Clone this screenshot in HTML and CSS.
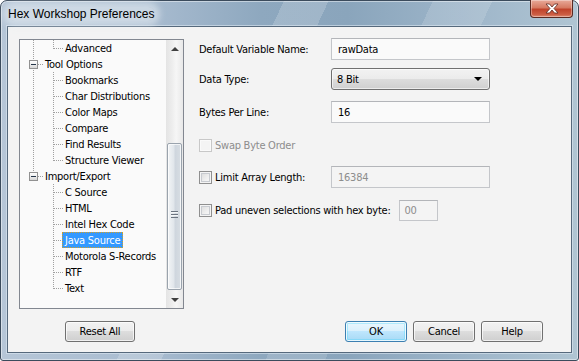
FILE: index.html
```html
<!DOCTYPE html>
<html>
<head>
<meta charset="utf-8">
<link rel="stylesheet" href="styles.css">
</head>
<body>
<div class="window">
  <div class="titlebar">
    <span class="title">Hex Workshop Preferences</span>
    <div class="close">
      <svg width="16" height="11" viewBox="0 0 16 11"><path d="M2 1h3.5l2.5 3 2.5-3H14l-4 4.5 4 4.5h-3.5L8 7 5.5 10H2l4-4.5z" fill="#fff" stroke="#5b2a22" stroke-width="0.8" stroke-linejoin="round"/></svg>
    </div>
  </div>
  <div class="client">
    <div class="main">
      <div class="tree">
        <ul class="tree-list">
          <li class="row"><span class="c v"></span><span class="c corner"></span><span class="lbl">Advanced</span></li>
          <li class="row root"><span class="c boxcell full"><span class="ebox"></span></span><span class="lbl">Tool Options</span></li>
          <li class="row"><span class="c v"></span><span class="c tee"></span><span class="lbl">Bookmarks</span></li>
          <li class="row"><span class="c v"></span><span class="c tee"></span><span class="lbl">Char Distributions</span></li>
          <li class="row"><span class="c v"></span><span class="c tee"></span><span class="lbl">Color Maps</span></li>
          <li class="row"><span class="c v"></span><span class="c tee"></span><span class="lbl">Compare</span></li>
          <li class="row"><span class="c v"></span><span class="c tee"></span><span class="lbl">Find Results</span></li>
          <li class="row"><span class="c v"></span><span class="c corner"></span><span class="lbl">Structure Viewer</span></li>
          <li class="row root"><span class="c boxcell last"><span class="ebox"></span></span><span class="lbl">Import/Export</span></li>
          <li class="row"><span class="c"></span><span class="c tee"></span><span class="lbl">C Source</span></li>
          <li class="row"><span class="c"></span><span class="c tee"></span><span class="lbl">HTML</span></li>
          <li class="row"><span class="c"></span><span class="c tee"></span><span class="lbl">Intel Hex Code</span></li>
          <li class="row"><span class="c"></span><span class="c tee"></span><span class="lbl sel">Java Source</span></li>
          <li class="row"><span class="c"></span><span class="c tee"></span><span class="lbl">Motorola S-Records</span></li>
          <li class="row"><span class="c"></span><span class="c tee"></span><span class="lbl">RTF</span></li>
          <li class="row"><span class="c"></span><span class="c corner"></span><span class="lbl">Text</span></li>
        </ul>
        <div class="scrollbar">
          <div class="sb-btn"><span class="arr-up"></span></div>
          <div class="sb-track">
            <div class="thumb"><span class="grip"></span></div>
          </div>
          <div class="sb-btn"><span class="arr-down"></span></div>
        </div>
      </div>

      <div class="form">
        <div class="frow r1">
          <span class="flabel">Default Variable Name:</span>
          <span class="field">rawData</span>
        </div>
        <div class="frow r2">
          <span class="flabel">Data Type:</span>
          <span class="select"><span>8 Bit</span><span class="sel-arrow"></span></span>
        </div>
        <div class="frow r3">
          <span class="flabel">Bytes Per Line:</span>
          <span class="field">16</span>
        </div>
        <div class="frow r4">
          <span class="chk disabled"></span>
          <span class="clabel dis">Swap Byte Order</span>
        </div>
        <div class="frow r5">
          <span class="chkwrap"><span class="chk"></span><span class="clabel">Limit Array Length:</span></span>
          <span class="field dis">16384</span>
        </div>
        <div class="frow r6">
          <span class="chk"></span>
          <span class="clabel">Pad uneven selections with hex byte:</span>
          <span class="field small dis">00</span>
        </div>
      </div>
    </div>

    <div class="buttons">
      <span class="btn reset">Reset All</span>
      <span class="btn def">OK</span>
      <span class="btn">Cancel</span>
      <span class="btn">Help</span>
    </div>
  </div>
</div>
</body>
</html>
```

FILE: styles.css
```css
* { box-sizing: border-box; }
html, body { margin: 0; padding: 0; }
body {
  width: 579px;
  height: 361px;
  background: #ffffff;
  font-family: "DejaVu Sans Condensed", "Liberation Sans", sans-serif;
  font-stretch: condensed;
  font-size: 11px;
  letter-spacing: -0.25px;
  color: #000;
  overflow: hidden;
}

.window {
  width: 579px;
  height: 361px;
  border: 1px solid #3b4b5c;
  border-radius: 7px 7px 3px 3px;
  background:
    linear-gradient(115deg, transparent 0 38%, rgba(255,255,255,0.18) 38% 44%, transparent 44% 58%, rgba(255,255,255,0.14) 58% 66%, transparent 66%),
    linear-gradient(90deg, #b6c6d7 0%, #a9bcd0 25%, #8ea8bf 45%, #8aa5bc 60%, #9db5c9 80%, #b0c5d3 100%);
  padding: 25px 6px 7px 6px;
  display: flex;
  flex-direction: column;
  box-shadow: inset 0 0 0 1px rgba(255,255,255,0.45);
}

.titlebar {
  height: 0;
  position: relative;
}
.title {
  position: absolute;
  left: 1px;
  top: -19px;
  font-family: "Liberation Sans", sans-serif;
  font-stretch: normal;
  letter-spacing: 0;
  font-size: 12px;
  color: #000;
  background: rgba(230,236,242,0.55);
  box-shadow: 0 0 6px 5px rgba(230,236,242,0.55);
  border-radius: 8px;
  line-height: 14px;
}
.close {
  position: absolute;
  right: -1px;
  top: -26px;
  width: 43px;
  height: 18px;
  border: 1px solid #5a2a22;
  border-top: none;
  border-radius: 0 0 4px 4px;
  background: linear-gradient(180deg, #e8aa9a 0%, #d67a62 45%, #c0432b 55%, #cc5d43 85%, #de8a72 100%);
  box-shadow: inset 0 0 0 1px rgba(255,255,255,0.35);
  display: flex;
  align-items: center;
  justify-content: center;
}

.client {
  flex: 1;
  border: 1px solid #56697c;
  background: #f3f3f3;
  display: flex;
  flex-direction: column;
  box-shadow: 0 0 0 1px rgba(220,232,242,0.6);
}

.main {
  display: flex;
  padding: 12px 0 0 11px;
  height: 294px;
}

/* Tree */
.tree {
  width: 165px;
  height: 270px;
  border: 1px solid #828790;
  background: #fafafa;
  display: flex;
}
.tree-list {
  list-style: none;
  margin: 0;
  padding: 0 0 0 3px;
  width: 146px;
}
.row {
  height: 16px;
  display: flex;
  align-items: center;
  white-space: nowrap;
}
.c {
  width: 20px;
  height: 16px;
  flex: none;
  background-repeat: no-repeat;
}
.v {
  background-image: repeating-linear-gradient(to bottom, #a0a0a0 0 1px, transparent 1px 2px);
  background-size: 1px 16px;
  background-position: 10px 0;
}
.tee {
  background-image:
    repeating-linear-gradient(to bottom, #a0a0a0 0 1px, transparent 1px 2px),
    repeating-linear-gradient(to right, #a0a0a0 0 1px, transparent 1px 2px);
  background-size: 1px 16px, 9px 1px;
  background-position: 10px 0, 11px 8px;
}
.corner {
  background-image:
    repeating-linear-gradient(to bottom, #a0a0a0 0 1px, transparent 1px 2px),
    repeating-linear-gradient(to right, #a0a0a0 0 1px, transparent 1px 2px);
  background-size: 1px 9px, 9px 1px;
  background-position: 10px 0, 11px 8px;
}
.boxcell {
  display: flex;
  align-items: center;
  padding-left: 6px;
  background-image:
    repeating-linear-gradient(to bottom, #a0a0a0 0 1px, transparent 1px 2px),
    repeating-linear-gradient(to right, #a0a0a0 0 1px, transparent 1px 2px);
  background-position: 10px 0, 11px 8px;
}
.boxcell.full { background-size: 1px 16px, 9px 1px; }
.boxcell.last { background-size: 1px 8px, 9px 1px; }
.ebox {
  width: 9px;
  height: 9px;
  border: 1px solid #919191;
  background:
    linear-gradient(#25364a, #25364a) center / 5px 1px no-repeat,
    linear-gradient(180deg, #ffffff 0%, #f0f0f0 45%, #d6d6d6 100%);
}
.lbl {
  margin-left: -1px;
  padding: 1px 2px 0 2px;
  height: 16px;
  border: 1px solid transparent;
  display: flex;
  align-items: center;
}
.sel {
  background: #3399ff;
  color: #fff;
  border: 1px dotted #d8a020;
}

.scrollbar {
  width: 17px;
  display: flex;
  flex-direction: column;
  background: linear-gradient(90deg, #e4e4e4 0%, #ededed 35%, #f6f6f6 60%, #e8e8e8 100%);
}
.sb-btn {
  height: 17px;
  display: flex;
  align-items: center;
  justify-content: center;
}
.arr-up, .arr-down {
  width: 0;
  height: 0;
  border-left: 4px solid transparent;
  border-right: 4px solid transparent;
}
.arr-up { border-bottom: 4px solid #3f3f3f; }
.arr-down { border-top: 4px solid #3f3f3f; }
.sb-track {
  flex: 1;
  padding-top: 86px;
  padding-bottom: 1px;
  display: flex;
  flex-direction: column;
}
.thumb {
  flex: 1;
  margin: 0 1px;
  border: 1px solid #9aa3ad;
  border-radius: 2px;
  background: linear-gradient(90deg, #f2f4f6 0%, #e1e6eb 45%, #cfd6de 55%, #d7dde3 100%);
  box-shadow: inset 0 0 0 1px rgba(255,255,255,0.7);
  display: flex;
  align-items: center;
  justify-content: center;
}
.grip {
  width: 7px;
  height: 7px;
  background: repeating-linear-gradient(to bottom, #6b7480 0 1px, #f4f6f8 1px 2px, transparent 2px 3px);
  margin-bottom: 4px;
}

/* Form */
.form {
  margin-left: 15px;
  margin-top: -1px;
  display: flex;
  flex-direction: column;
}
.frow {
  display: flex;
  align-items: center;
  white-space: nowrap;
}
.r1 { height: 22px; }
.r2 { height: 22px; margin-top: 8px; }
.r3 { height: 22px; margin-top: 11px; }
.r4 { height: 16px; margin-top: 14px; }
.r5 { height: 22px; margin-top: 13px; }
.r6 { height: 21px; margin-top: 12px; }
.flabel { width: 132px; }
.chkwrap { width: 132px; display: flex; align-items: center; }
.field {
  width: 159px;
  height: 22px;
  border: 1px solid #c4c6ca;
  border-top-color: #b3b5b9;
  background: #fafafa;
  padding-left: 6px;
  display: flex;
  align-items: center;
}
.field.dis { color: #8d8d8d; background: #f4f4f4; }
.r6 .field { height: 21px; }
.field.small { width: 39px; margin-left: 8px; padding-left: 5px; }
.select {
  width: 159px;
  height: 22px;
  border: 1px solid #707070;
  border-radius: 3px;
  background: linear-gradient(180deg, #f2f2f2 0%, #ebebeb 50%, #dddddd 50%, #cfcfcf 100%);
  box-shadow: inset 0 0 0 1px rgba(255,255,255,0.6);
  padding: 0 6px 0 5px;
  display: flex;
  align-items: center;
  justify-content: space-between;
}
.sel-arrow {
  width: 0;
  height: 0;
  border-left: 4px solid transparent;
  border-right: 4px solid transparent;
  border-top: 4px solid #000;
  margin-right: 1px;
}
.chk {
  width: 13px;
  height: 13px;
  flex: none;
  border: 1px solid #8f8f8f;
  background: linear-gradient(135deg, #d8d8d8 0%, #f0f0f0 60%, #fbfbfb 100%);
  box-shadow: inset 0 0 0 1px #f4f4f4, inset 0 0 0 2px #c8cbd0;
}
.chk.disabled {
  border-color: #c8c8c8;
  background: #f4f4f4;
  box-shadow: inset 0 0 0 1px #fafafa;
}
.clabel { margin-left: 3px; }
.clabel.dis { color: #8d8d8d; }

/* Buttons */
.buttons {
  display: flex;
  align-items: center;
  padding: 0 28px 0 57px;
  height: 21px;
}
.btn {
  width: 62px;
  height: 21px;
  border: 1px solid #707070;
  border-radius: 3px;
  background: linear-gradient(180deg, #f2f2f2 0%, #ebebeb 50%, #dddddd 50%, #cfcfcf 100%);
  box-shadow: inset 0 0 0 1px rgba(255,255,255,0.7);
  display: flex;
  align-items: center;
  justify-content: center;
  margin-left: 6px;
}
.btn.reset { width: 70px; margin-left: 0; margin-right: auto; }
.btn.def {
  border-color: #3c7fb1;
  background: linear-gradient(180deg, #eaf6fd 0%, #d9f0fc 50%, #bee6fd 50%, #a7d9f5 100%);
  box-shadow: inset 0 0 0 1px rgba(255,255,255,0.8), inset 0 0 0 2px rgba(72,216,251,0.35);
}
```
